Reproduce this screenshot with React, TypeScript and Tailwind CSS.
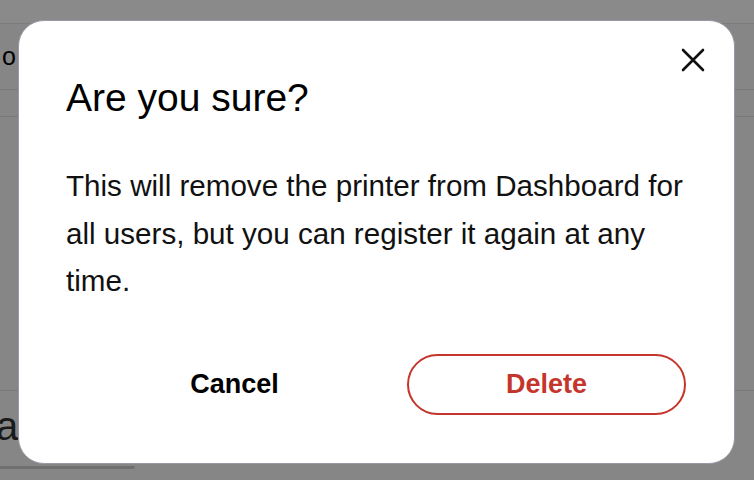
const FONT = "font-['Liberation_Sans',Arial,sans-serif]"

/** Dimmed page behind the dialog */
const Backdrop = () => (
  <div className="flex h-full w-full flex-col bg-[#868686]">
    <div className="h-[24px] border-b border-[#7c7c7c] bg-[#8a8a8a]" />
    <div className="flex h-[66px] items-center border-b border-[#7a7a7a] pl-[2px]">
      <span className={`${FONT} text-[25px] leading-none text-black`}>o</span>
    </div>
    <div className="h-[27px] border-b border-[#7a7a7a]" />
    <div className="h-[274px] border-b border-[#7a7a7a]" />
    <div className="flex h-[75px] items-end pb-[20px]">
      <span className={`${FONT} -ml-[4px] text-[40px] leading-none text-[#1a1a1a]`}>
        a
      </span>
    </div>
    <div className="h-[3px] w-[135px] rounded-br-[4px] bg-[#6f6f6f]" />
  </div>
)

const CloseIcon = () => (
  <svg width="24" height="24" viewBox="0 0 24 24" fill="none">
    <path
      d="M2 2 L22 22 M22 2 L2 22"
      stroke="#111"
      strokeWidth="2.6"
      strokeLinecap="round"
    />
  </svg>
)

const ConfirmDialog = () => (
  <div
    className={`${FONT} relative h-[444px] w-[717px] rounded-[26px] border border-[#9a98a6] bg-white pt-[54px] pl-[47px] pr-[48px]`}
  >
    <button className="absolute right-[29px] top-[27px] cursor-pointer">
      <CloseIcon />
    </button>

    <h2 className="text-[39px] leading-[46px] text-black">Are you sure?</h2>

    <p className="mt-[41px] w-[650px] text-[29.6px] leading-[47.5px] text-[#111]">
      This will remove the printer from Dashboard for all users, but you can
      register it again at any time.
    </p>

    <div className="mt-[49px] flex justify-end gap-[33px]">
      <button className="flex h-[61px] w-[279px] items-center justify-center rounded-full text-[27px] font-bold text-black">
        Cancel
      </button>
      <button className="flex h-[61px] w-[279px] items-center justify-center rounded-full border-2 border-[#c4352c] text-[27px] font-bold text-[#c4352c]">
        Delete
      </button>
    </div>
  </div>
)

export default function App() {
  return (
    <div className="relative h-[480px] w-[754px] overflow-hidden">
      <Backdrop />
      <div className="absolute inset-0 pl-[18px] pt-[20px]">
        <ConfirmDialog />
      </div>
    </div>
  )
}
